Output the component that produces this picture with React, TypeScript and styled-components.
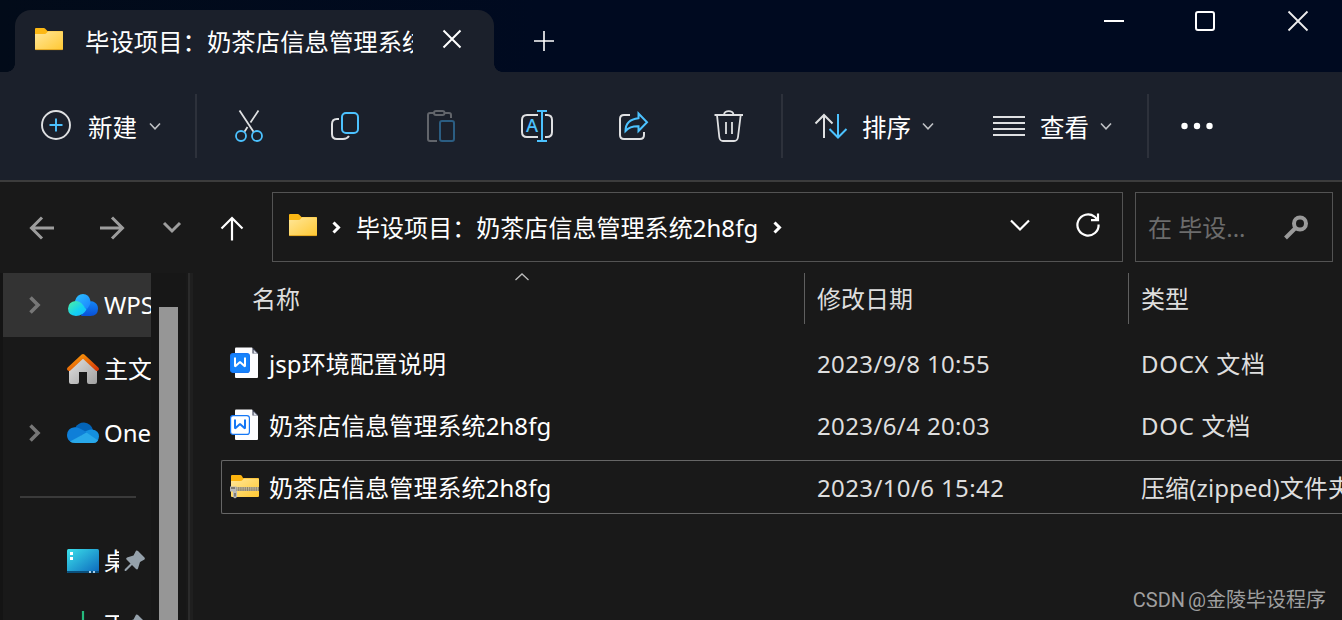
import React, { ReactElement, ReactNode } from "react";
import styled, { createGlobalStyle } from 'styled-components'

export default function App(): ReactElement {
  return (
    <Window>
      <GlobalStyle />
      <TitleBar />
      <Toolbar />
      <NavBar />
      <Body>
        <Sidebar />
        <FileList />
      </Body>
      <Watermark>CSDN @金陵毕设程序</Watermark>
    </Window>
  );
}

/* ---------- title bar ---------- */

function TitleBar() {
  return (
    <TitleBarDiv>
      <TabDiv>
        <FolderIcon />
        <TabTitle>毕设项目：奶茶店信息管理系统</TabTitle>
        <Svg w={20} h={20} sw={2} color="#fff"><path d="M1.5 1.5L18.5 18.5M18.5 1.5L1.5 18.5" /></Svg>
      </TabDiv>
      <NewTabButton>
        <Svg w={20} h={20} sw={1.6} color="#fff"><path d="M10 0V20M0 10H20" /></Svg>
      </NewTabButton>
      <WindowButtons>
        <Svg w={20} h={20} sw={2} color="#fff"><path d="M0 10H20" /></Svg>
        <Svg w={20} h={20} sw={2} color="#fff"><rect x="1" y="1" width="18" height="18" rx="2" /></Svg>
        <Svg w={20} h={20} sw={1.8} color="#eee"><path d="M.5 .5L19.5 19.5M19.5 .5L.5 19.5" /></Svg>
      </WindowButtons>
    </TitleBarDiv>
  );
}

/* ---------- toolbar ---------- */

function Toolbar() {
  return (
    <ToolbarDiv>
      <MenuButton width={195} pad={40} gap={16}>
        <Svg w={32} h={32} sw={1.9}>
          <circle cx="16" cy="15" r="14" />
          <path d="M16 8.5V21.5M9.5 15H22.5" stroke={BLUE} />
        </Svg>
        <MenuText>新建</MenuText>
        <SmallChevron />
      </MenuButton>
      <Divider />
      <IconButtons>
        <Svg w={32} h={32} sw={1.8}>
          <path d="M6.5 .5L20.7 22M25.5 .5L17.5 12.5M14.5 17L11.5 21.7" />
          <circle cx="8" cy="26" r="5" stroke={BLUE} />
          <circle cx="24" cy="26" r="5" stroke={BLUE} />
        </Svg>
        <Svg w={32} h={32} sw={2}>
          <path d="M10 9H8Q3 9 3 14V24Q3 29 8 29H14Q18 29 20 26" />
          <rect x="13" y="3" width="16" height="20" rx="4" stroke={BLUE} />
        </Svg>
        <Svg w={32} h={32} sw={2} color="#62656b">
          <path d="M9 3H5Q3 3 3 5V29Q3 31 5 31H12M19 3H24Q26 3 26 5V8" />
          <rect x="9" y="1" width="10.5" height="4" rx="2" />
          <rect x="15" y="11" width="14" height="20" rx="2" stroke="#2b5d82" />
        </Svg>
        <Svg w={32} h={32} sw={2}>
          <path d="M17 5H6Q1 5 1 10V22Q1 27 6 27H17M24 5H26Q31 5 31 10V22Q31 27 26 27H24" />
          <path d="M21 1V31M16 1H26M16 31H26" stroke={BLUE} />
          <RenameLetter x="11" y="22">A</RenameLetter>
        </Svg>
        <Svg w={32} h={32} sw={2}>
          <path d="M13 5H7Q3 5 3 9V25Q3 29 7 29H23Q27 29 27 25V22" />
          <path d="M21.5 3.5L30 12.3L21.5 21V16.3Q13 16 8.5 21Q8.5 9.5 21.5 8.2Z" stroke={BLUE} />
        </Svg>
        <Svg w={32} h={32} sw={1.8}>
          <path d="M1.5 5H30M11 5C11 -.2 20.500 -.2 20.500 5M4 5L6.3 27Q6.8 31 10 31H21Q24.500 31 25 27L27.700 5M13 12V24M19 12V24" />
        </Svg>
      </IconButtons>
      <Divider />
      <MenuButton width={206} pad={32} gap={15}>
        <Svg w={32} h={32} sw={2}>
          <path d="M9 4.5V28M.5 13.5L9 5L17.5 13.5" />
          <path d="M23 4V27.5M14.5 19L23 27.5L31.5 19" stroke={BLUE} />
        </Svg>
        <MenuText>排序</MenuText>
        <SmallChevron />
      </MenuButton>
      <MenuButton width={158} pad={4} gap={15}>
        <Svg w={32} h={32} sw={2}>
          <path d="M0 7H32M0 13H32M0 19H32M0 25H32" />
        </Svg>
        <MenuText>查看</MenuText>
        <SmallChevron />
      </MenuButton>
      <Divider />
      <MenuButton width={80} pad={31} gap={0}>
        <Svg w={34} h={10} sw={0}>
          <g fill="#fff"><circle cx="4.5" cy="5" r="3.2" /><circle cx="17" cy="5" r="3.2" /><circle cx="29.5" cy="5" r="3.2" /></g>
        </Svg>
      </MenuButton>
    </ToolbarDiv>
  );
}

function SmallChevron() {
  return <Svg w={12} h={10} sw={1.6} color="#bfc1c5"><path d="M1 2.5L6 7.8L11 2.5" /></Svg>;
}

/* ---------- address bar ---------- */

function NavBar() {
  return (
    <NavBarDiv>
      <NavButtons>
        <Svg w={24} h={24} sw={3} color="#9d9d9d"><path d="M24 12H1.5M12 1.5L1.5 12L12 22.5" /></Svg>
        <Svg w={24} h={24} sw={3} color="#9d9d9d"><path d="M0 12H22.5M12 1.5L22.5 12L12 22.5" /></Svg>
        <Svg w={24} h={24} sw={3} color="#9d9d9d"><path d="M4 7L12 15L20 7" /></Svg>
        <Svg w={24} h={24} sw={2.2} color="#fff"><path d="M12 24.5V2.5M1.5 12.5L12 2L22.5 12.5" /></Svg>
      </NavButtons>
      <AddressBox>
        <FolderIcon />
        <Crumb />
        <AddressText>毕设项目：奶茶店信息管理系统2h8fg</AddressText>
        <Crumb />
        <AddressActions>
          <Svg w={20} h={12} sw={2.2} color="#fff"><path d="M1 1.5L10 10.5L19 1.5" /></Svg>
          <Svg w={24} h={24} sw={2.2} color="#fff"><path d="M22.6 11.5A10.6 10.6 0 1 1 18.5 3.6L21.5 6.8M22 .5V7.2H15" /></Svg>
        </AddressActions>
      </AddressBox>
      <SearchBox>
        <SearchText>在 毕设...</SearchText>
        <Svg w={24} h={24} sw={4} color="#9a9a9a"><circle cx="16" cy="8.5" r="6" /><path d="M11.5 13L1.5 23" /></Svg>
      </SearchBox>
    </NavBarDiv>
  );
}

function Crumb() {
  return <Svg w={8} h={14} sw={3} color="#fff"><path d="M1.5 2.5L6.5 7.5L1.5 12.5" /></Svg>;
}

/* ---------- sidebar ---------- */

function Sidebar() {
  return (
    <SidebarDiv>
      <Tree>
        <TreeItem $active>
          <Expander open />
          <WpsCloudIcon />
          <TreeText>WPS</TreeText>
        </TreeItem>
        <TreeItem>
          <Expander />
          <HouseIcon />
          <TreeText>主文</TreeText>
        </TreeItem>
        <TreeItem>
          <Expander open />
          <OneDriveIcon />
          <TreeText>One</TreeText>
        </TreeItem>
        <TreeGap><TreeLine /></TreeGap>
        <TreeItem>
          <Expander />
          <DesktopIcon />
          <TreeText $pinned>桌</TreeText>
          <PinIcon />
        </TreeItem>
        <TreeItem>
          <Expander />
          <DownloadIcon />
          <TreeText $pinned>下</TreeText>
          <PinIcon />
        </TreeItem>
      </Tree>
      <ScrollTrack><ScrollThumb /></ScrollTrack>
      <Splitter />
    </SidebarDiv>
  );
}

function Expander({ open }: { open?: boolean }) {
  return (
    <ExpanderSpan>
      {open && <Svg w={12} h={18} sw={3.6} color="#777"><path d="M1.500 1.500L9 9L1.500 16.500" /></Svg>}
    </ExpanderSpan>
  );
}

/* ---------- file list ---------- */

const files = [
  { name: 'jsp环境配置说明', date: '2023/9/8 10:55', type: 'DOCX 文档', icon: <WordIcon solid /> },
  { name: '奶茶店信息管理系统2h8fg', date: '2023/6/4 20:03', type: 'DOC 文档', icon: <WordIcon /> },
  { name: '奶茶店信息管理系统2h8fg', date: '2023/10/6 15:42', type: '压缩(zipped)文件夹', icon: <ZipIcon />, selected: true },
]

function FileList() {
  return (
    <FileListDiv>
      <HeaderRow>
        <HeaderCell pad={59}>
          名称
          <SortMark><Svg w={14} h={8} sw={1.3} color="#bbb"><path d="M.5 7L7 1L13.5 7" /></Svg></SortMark>
        </HeaderCell>
        <HeaderCell pad={12} $line>修改日期</HeaderCell>
        <HeaderCell pad={12} $line>类型</HeaderCell>
      </HeaderRow>
      {files.map((file) => (
        <FileRow key={file.type} $selected={file.selected}>
          <NameCell>{file.icon}<NameText>{file.name}</NameText></NameCell>
          <FileCell spacing={0.38}>{file.date}</FileCell>
          <FileCell spacing={file.selected ? 0.1 : 0.7}>{file.type}</FileCell>
        </FileRow>
      ))}
    </FileListDiv>
  );
}

/* ---------- icons ---------- */

const BLUE = '#4cc2ff'

type SvgProps = { w: number; h: number; sw?: number; color?: string; children: ReactNode }

function Svg({ w, h, sw = 2, color = '#dfe0e2', children }: SvgProps) {
  return (
    <IconSvg width={w} height={h} viewBox={`0 0 ${w} ${h}`} fill="none" stroke={color} strokeWidth={sw}>
      {children}
    </IconSvg>
  );
}

function FolderIcon() {
  return (
    <IconSvg width="28" height="24" viewBox="0 0 28 24">
      <defs>
        <linearGradient id="folder" x1="0" y1="0" x2="1" y2="1">
          <stop offset="0" stopColor="#ffe79a" /><stop offset="1" stopColor="#ffc832" />
        </linearGradient>
      </defs>
      <path d="M0 2Q0 1 1 1H9Q10 1 11 2.5L12.5 4H27Q28 4 28 5V10H0Z" fill="#fcb814" />
      <path d="M0 7H9.5Q11 7 12 5.5L13 4.3H27Q28 4.3 28 5.3V22Q28 23 27 23H1Q0 23 0 22Z" fill="url(#folder)" />
      <path d="M.5 22.6H27.5" stroke="#e0a21c" strokeWidth=".9" />
    </IconSvg>
  );
}

function WpsCloudIcon() {
  return (
    <IconSvg width="32" height="32" viewBox="0 0 32 32">
      <defs>
        <linearGradient id="wpsA" x1="0" y1="0" x2="1" y2="1">
          <stop offset="0" stopColor="#4ff0a0" /><stop offset=".6" stopColor="#12d0f4" /><stop offset="1" stopColor="#1cb4ff" />
        </linearGradient>
        <linearGradient id="wpsB" x1="0" y1="0" x2="1" y2="1">
          <stop offset="0" stopColor="#2cc4ff" /><stop offset="1" stopColor="#1a80ff" />
        </linearGradient>
        <linearGradient id="wpsC" x1="0" y1="0" x2="0" y2="1">
          <stop offset="0" stopColor="#1484f4" /><stop offset="1" stopColor="#0850d8" />
        </linearGradient>
      </defs>
      <path d="M14 27L20 14Q23 11.5 26 12.5Q31 14.5 31 19.5Q31 27 23.5 27Z" fill="url(#wpsC)" />
      <path d="M8 12Q10 5 16 5Q22 5 23.5 12Q24 15 20 20Z" fill="url(#wpsB)" />
      <path d="M8.5 12Q13 12 16 16L19.5 20.5Q16 27 9 27Q1 26.5 1 19.5Q1.5 12.5 8.5 12Z" fill="url(#wpsA)" />
    </IconSvg>
  );
}

function HouseIcon() {
  return (
    <IconSvg width="32" height="32" viewBox="0 0 32 32">
      <defs>
        <linearGradient id="wall" x1="0" y1="0" x2="1" y2="1">
          <stop offset="0" stopColor="#e4e4e4" /><stop offset="1" stopColor="#a0a0a0" />
        </linearGradient>
        <linearGradient id="roof" x1="0" y1="0" x2="1" y2="1">
          <stop offset="0" stopColor="#fba00a" /><stop offset="1" stopColor="#d83b08" />
        </linearGradient>
      </defs>
      <path d="M2 16L16 3L30 16V29Q30 31 28 31H22Q20 31 20 29V19H12V29Q12 31 10 31H4Q2 31 2 29Z" fill="url(#wall)" />
      <path d="M2 16L16 3L30 16" fill="none" stroke="url(#roof)" strokeWidth="4" strokeLinecap="round" strokeLinejoin="round" />
    </IconSvg>
  );
}

function OneDriveIcon() {
  return (
    <IconSvg width="32" height="32" viewBox="0 0 32 32">
      <path d="M8 11Q11 5.5 17 5.5Q24 6 26 13L17 18Z" fill="#0364b8" />
      <path d="M25 12.5Q32 13.5 32 19.5Q31.5 26 26 26L14 17Q20 12.5 25 12.5Z" fill="#1490df" />
      <path d="M0 18Q.5 11 7.5 10.3Q12 10.3 20 15.5L4 25Q0 23 0 18Z" fill="#0f7fd8" />
      <path d="M3 24.5L19.5 15.5L31 23.5Q29.5 26 26 26H8Q4.5 26 3 24.5Z" fill="#28a8ea" />
    </IconSvg>
  );
}

function DesktopIcon() {
  return (
    <IconSvg width="32" height="32" viewBox="0 0 32 32">
      <defs>
        <linearGradient id="desk" x1="0" y1="0" x2="1" y2="1">
          <stop offset="0" stopColor="#3be0ea" /><stop offset="1" stopColor="#0c67bd" />
        </linearGradient>
      </defs>
      <rect x="0" y="4" width="32" height="24" rx="1.5" fill="url(#desk)" />
      <path d="M0 26H32V26.5Q32 28 30.5 28H1.5Q0 28 0 26.5Z" fill="#0b4f7c" />
      <path d="M3 7H6V10H3ZM3 12H6V15H3Z" fill="#fff" />
      <path d="M22 26H24V28H22ZM26 26H28V28H26Z" fill="#a8cdea" />
    </IconSvg>
  );
}

function DownloadIcon() {
  return (
    <IconSvg width="32" height="32" viewBox="0 0 32 32">
      <path d="M16 2V24M8 16L16 24L24 16" fill="none" stroke="#25b97c" strokeWidth="2.2" />
    </IconSvg>
  );
}

function PinIcon() {
  return (
    <IconSvg width="22" height="22" viewBox="0 0 22 22">
      <path d="M12 .8Q13 .3 14 1L20.5 7.5Q21.3 8.5 20.5 9.5L16 12L14 18.5Q13.3 20 12 19L8 15L2.5 20.5Q1.5 21.5 .8 20.8T1 19L6.5 13.5L2.5 9.5Q1.5 8.5 3 7.5L9.5 5.5Z" fill="#95a1ab" />
    </IconSvg>
  );
}

function WordIcon({ solid }: { solid?: boolean }) {
  return (
    <IconSvg width="29" height="32" viewBox="0 0 29 32">
      <path d="M5 1.5Q5 .5 6 .5H22L28 6.500V30Q28 31 27 31H6Q5 31 5 30Z" fill="#fdfdff" />
      <path d="M22.5 .5L28.5 6.5H22.5Z" fill="#2a2f45" />
      <path d="M23.5 2.5L27.5 6.5H23.5Z" fill="#d8dce6" />
      <rect x="0.6" y="6.6" width="18.8" height="18.8" rx="2.5" fill={solid ? '#1683fb' : '#fff'} stroke="#1677f5" strokeWidth="1.2" />
      <path d="M5 10.5V19.5L10 15L15 19.5V10.5" fill="none" stroke={solid ? '#fff' : '#1677f5'} strokeWidth="2" strokeLinejoin="bevel" />
    </IconSvg>
  );
}

function ZipIcon() {
  return (
    <IconSvg width="29" height="32" viewBox="0 0 29 32">
      <path d="M1 5Q1 4 2 4H10.5Q12 4 13 7H28Q29 7 29 8V14H1Z" fill="#fcb40e" />
      <path d="M1 10H10Q12 10 13 8.5L14 7.5H28Q29 7.5 29 8.5V25Q29 26 28 26H2Q1 26 1 25Z" fill="url(#folder)" />
      <path d="M6 18H29" stroke="#8f8468" strokeWidth="4" />
      <path d="M7 17H29" stroke="#e9e4d2" strokeWidth="1.2" strokeDasharray="1.2 1" />
      <path d="M7 19H29" stroke="#d6d0bd" strokeWidth="1.2" strokeDasharray="1.2 1" />
      <path d="M0 15.5H6.5V20.5H7V26L5 27.5L3 26V20.5H0Z" fill="#b9b9b9" />
      <path d="M1 17H5M5 22V25.5" stroke="#6c675c" strokeWidth="1.4" />
    </IconSvg>
  );
}

/* ---------- styles ---------- */

const GlobalStyle = createGlobalStyle`
  body {
    margin: 0;
    background: #191919;
  }
`

const Window = styled.div`
  position: relative;
  display: flex;
  flex-direction: column;
  width: 1342px;
  height: 620px;
  overflow: hidden;
  background: #191919;
  color: #fff;
  font-family: 'Noto Sans', 'Noto Sans CJK SC', sans-serif;
  font-size: 24px;
  line-height: 36px;
  white-space: nowrap;
`

const IconSvg = styled.svg`
  display: block;
  flex: none;
  overflow: visible;
`

const TitleBarDiv = styled.div`
  display: flex;
  height: 72px;
  flex: none;
  background: linear-gradient(90deg, #020b19, #000a20 40%);
`

const TabDiv = styled.div`
  position: relative;
  display: flex;
  align-items: center;
  box-sizing: border-box;
  width: 479px;
  height: 62px;
  margin: 10px 0 0 15px;
  padding: 0 31px 4px 20px;
  border-radius: 16px 16px 0 0;
  background: #1b202b;

  /* curved feet of the tab */
  &::before, &::after {
    content: '';
    position: absolute;
    bottom: 0;
    width: 8px;
    height: 8px;
  }
  &::before {
    left: -8px;
    background: radial-gradient(circle at 0 0, transparent 7.5px, #1b202b 8px);
  }
  &::after {
    right: -8px;
    background: radial-gradient(circle at 100% 0, transparent 7.5px, #1b202b 8px);
  }
`

const TabTitle = styled.span`
  width: 328px;
  margin: 5px 29px 0 22px;
  overflow: hidden;
  font-size: 24.4px;
`

const NewTabButton = styled.div`
  padding: 31px 0 0 40px;
`

const WindowButtons = styled.div`
  display: grid;
  grid-template-columns: 91px 93px 20px;
  margin-left: auto;
  padding: 11px 34px 0 0;
`

const ToolbarDiv = styled.div`
  display: flex;
  align-items: center;
  flex: none;
  height: 108px;
  border-bottom: 2px solid #3c3c3c;
  background: #1b202b;
`

const MenuButton = styled.div<{ width: number; pad: number; gap: number }>`
  display: flex;
  align-items: center;
  box-sizing: border-box;
  width: ${p => p.width}px;
  padding-left: ${p => p.pad}px;
  gap: ${p => p.gap}px;
`

const MenuText = styled.span`
  width: 49px;
  margin: 4px -4px 0 0;
  font-size: 24.5px;
`

const Divider = styled.div`
  width: 2px;
  height: 64px;
  background: #2d313b;
`

const IconButtons = styled.div`
  display: flex;
  gap: 64px;
  padding: 0 36px;
`

const RenameLetter = styled.text`
  fill: ${BLUE};
  stroke: none;
  font: 500 18.5px 'Noto Sans', sans-serif;
  text-anchor: middle;
`

const NavBarDiv = styled.div`
  display: flex;
  flex: none;
  box-sizing: border-box;
  height: 91px;
  padding: 10px 9px 11px 0;
`

const NavButtons = styled.div`
  display: grid;
  grid-template-columns: 70px 60px 60px 24px;
  align-items: center;
  width: 242px;
  padding: 2px 0 0 30px;
`

const AddressBox = styled.div`
  display: flex;
  align-items: center;
  box-sizing: border-box;
  width: 851px;
  padding: 0 22px 0 16px;
  border: 1px solid #535353;
  gap: 15px;

  & > svg:first-child {
    margin-top: -5px;
  }
`

const AddressText = styled.span`
  margin: 1px 0 0 1px;
  letter-spacing: 0.05px;
`

const AddressActions = styled.div`
  display: flex;
  align-items: center;
  gap: 46px;
  margin: -5px 0 0 auto;
`

const SearchBox = styled.div`
  display: flex;
  align-items: center;
  justify-content: space-between;
  box-sizing: border-box;
  width: 198px;
  margin-left: 12px;
  padding: 0 24px 0 12px;
  border: 1px solid #535353;
`

const SearchText = styled.span`
  margin-top: 1px;
  color: #6c6c6c;
`

const Body = styled.div`
  display: flex;
  flex: 1;
  min-height: 0;
`

const SidebarDiv = styled.div`
  display: flex;
  flex: none;
  width: 193px;
`

const Tree = styled.div`
  width: 148px;
  border-left: 3px solid #141414;
`

const TreeItem = styled.div<{ $active?: boolean }>`
  display: flex;
  align-items: center;
  height: 64px;
  overflow: hidden;
  background: ${p => p.$active ? '#333' : 'none'};
`

const ExpanderSpan = styled.span`
  flex: none;
  width: 38px;
  padding-left: 26px;
`

const TreeText = styled.span<{ $pinned?: boolean }>`
  flex: none;
  width: ${p => p.$pinned ? 15 : 47}px;
  margin: 0 5px;
  overflow: hidden;
`

const TreeGap = styled.div`
  display: flex;
  align-items: center;
  height: 64px;
`

const TreeLine = styled.div`
  width: 116px;
  height: 2px;
  margin-left: 17px;
  background: #3a3a3a;
`

const ScrollTrack = styled.div`
  box-sizing: border-box;
  width: 35px;
  padding: 34px 8px 0;
  background: #171717;
`

const ScrollThumb = styled.div`
  height: 100%;
  background: #969696;
`

const Splitter = styled.div`
  width: 2px;
  margin-left: 2px;
  background: #2b2b2b;
  border-right: 3px solid #1f1f1f;
`

const FileListDiv = styled.div`
  flex: 1;
  min-width: 0;
`

const HeaderRow = styled.div`
  display: grid;
  grid-template-columns: 611px 324px 1fr;
  height: 51px;
  margin-bottom: 12px;
  color: #dedede;
`

const HeaderCell = styled.div<{ pad: number; $line?: boolean }>`
  position: relative;
  padding: 8px 0 0 ${p => p.pad}px;
  border-left: ${p => p.$line ? '1px solid #5f5f5f' : 'none'};
`

// sits on the top edge of the sorted column
const SortMark = styled.span`
  position: absolute;
  top: 0;
  left: 322px;
`

const FileRow = styled.div<{ $selected?: boolean }>`
  display: grid;
  grid-template-columns: 582px 324px 1fr;
  align-items: center;
  box-sizing: border-box;
  height: 54px;
  margin: 0 0 8px 28px;
  border: 1px solid ${p => p.$selected ? '#666' : 'transparent'};
  border-right: none;
  border-radius: 2px 0 0 2px;
`

const NameCell = styled.div`
  display: flex;
  align-items: center;
  gap: 10px;
  padding-left: 8px;
`

const NameText = styled.span`
  margin-top: 2px;
  letter-spacing: 0.07px;
`

const FileCell = styled.div<{ spacing: number }>`
  padding: 2px 0 0 13px;
  overflow: hidden;
  color: #dedede;
  letter-spacing: ${p => p.spacing}px;
`

const Watermark = styled.div`
  position: absolute;
  right: 16px;
  bottom: 2px;
  color: #9f9f9f;
  font-family: Roboto, 'Noto Sans CJK SC', sans-serif;
  font-size: 20px;
  word-spacing: -2px;
`
